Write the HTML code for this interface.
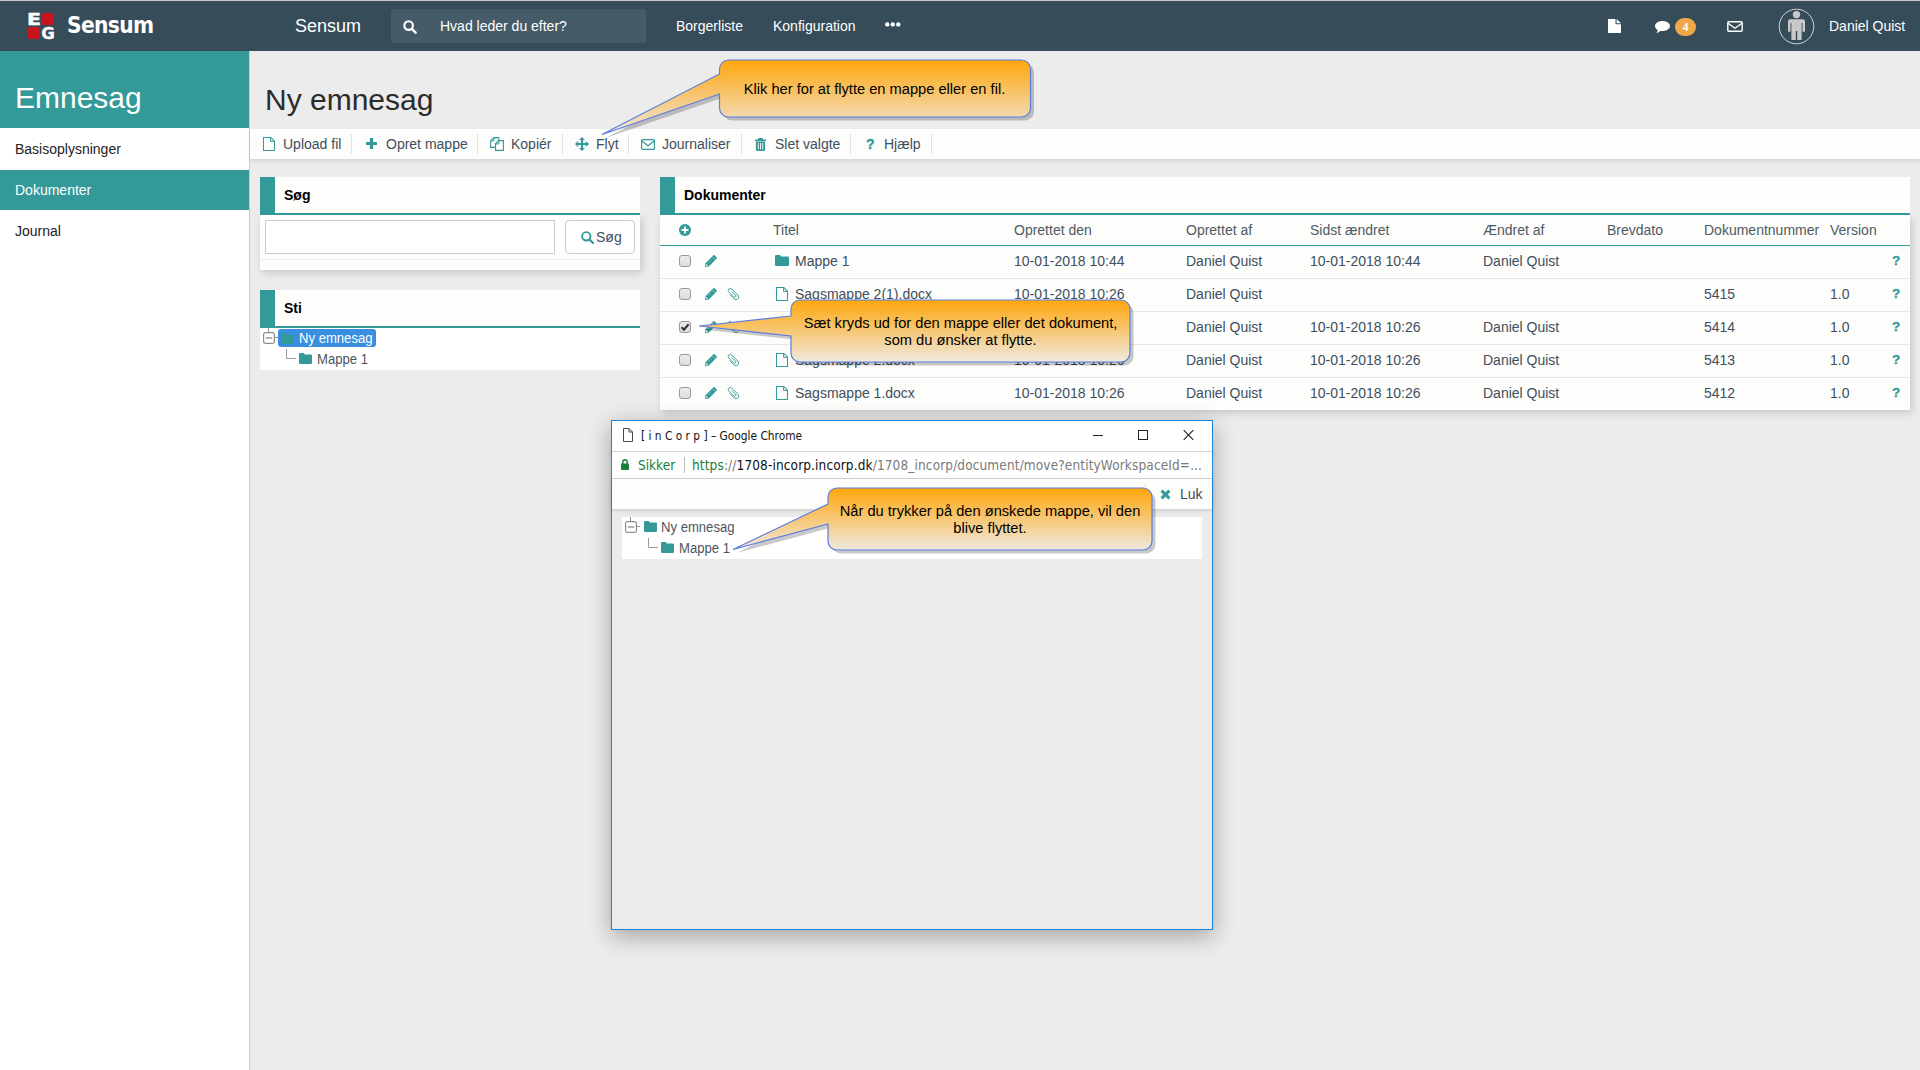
<!DOCTYPE html>
<html lang="da">
<head>
<meta charset="utf-8">
<title>Ny emnesag</title>
<style>
*{box-sizing:border-box;margin:0;padding:0}
html,body{width:1920px;height:1070px;overflow:hidden}
body{background:#ececec;font-family:"Liberation Sans",Arial,sans-serif;font-size:14px;color:#333;position:relative}
.abs{position:absolute}
svg{display:block;overflow:visible}
#topline{left:0;top:0;width:1920px;height:1px;background:#c8c8c8}
#hdr{left:0;top:1px;width:1920px;height:50px;background:#364c58;color:#fff}
#hdr .t{position:absolute;white-space:nowrap;color:#fff}
#srch{left:391px;top:8px;width:255px;height:34px;background:#455c68;border-radius:3px}
#side{left:0;top:51px;width:249px;height:1019px;background:#fff}
#sideline{left:249px;top:51px;width:1px;height:1019px;background:#c9c9c9}
#sideline2{left:249px;top:51px;width:1px;height:77px;background:#d6d0d0}
#topglow{left:250px;top:51px;width:1670px;height:1px;background:#f6f6f6}
#hdrline{left:0;top:50px;width:1920px;height:1px;background:#30444f}
#sidehead{left:0;top:0;width:249px;height:77px;background:#339999}
#sidehead span{position:absolute;left:15px;top:29px;font-size:30px;line-height:36px;color:#fff}
.nav{position:absolute;left:0;width:249px;height:42px;line-height:42px;padding-left:15px;font-size:14px;color:#222}
.nav.on{background:#339999;color:#fff}
#h1{left:265px;top:81px;font-size:30px;line-height:38px;color:#2b2b2b;white-space:nowrap}
#tb{left:250px;top:129px;width:1670px;height:30px;background:#fdfdfb;box-shadow:0 2px 4px rgba(0,0,0,.10)}
.tx{position:absolute;white-space:nowrap;font-size:14px;line-height:20px;color:#3f4f5e}
.sep{position:absolute;width:1px;background:#e3e3e3}
.panel{position:absolute;background:#fdfdfb}
.ph{position:absolute;left:0;top:0;right:0;height:38px;border-bottom:2px solid #339999;background:#fdfdfb}
.ph:before{content:"";position:absolute;left:0;top:0;width:15px;height:38px;background:#339999}
.ph b{position:absolute;left:24px;top:0;line-height:36px;font-size:14px;color:#000;white-space:nowrap}
.pb{position:absolute;left:0;right:0;top:38px;bottom:0;background:#fdfdfb;box-shadow:2px 3px 8px rgba(0,0,0,.16)}
.cb{position:absolute;width:12px;height:12px;border:1px solid #9a9a9a;border-radius:3px;background:linear-gradient(#ececec,#dcdcdc)}
.hl{position:absolute;height:1px;left:0;right:0}
.tree{position:absolute;white-space:nowrap;font-size:14px;line-height:18px;color:#4c5660;transform:scaleX(.935);transform-origin:0 0}
.co{position:absolute;text-align:center;font-size:14.67px;line-height:17px;color:#000;white-space:nowrap}
#win{left:611px;top:420px;width:602px;height:510px;border:1px solid #1a84d8;background:#ebebeb;box-shadow:0 6px 22px rgba(0,0,0,.32)}
.seg{font-family:"DejaVu Sans Condensed","Liberation Sans",sans-serif}
</style>
</head>
<body>
<div id="topline" class="abs"></div>
<div id="hdr" class="abs">
  <svg class="abs" style="left:28px;top:12px" width="26" height="26" viewBox="0 0 26 26">
    <rect x="14" y="0" width="12" height="12" rx="1.2" fill="#c4161c"/>
    <rect x="0" y="14" width="12" height="12" rx="1.2" fill="#c4161c"/>
    <text x="-1" y="12" textLength="14" lengthAdjust="spacingAndGlyphs" font-family="DejaVu Sans, Liberation Sans, sans-serif" font-weight="bold" font-size="16.6" fill="#fff" stroke="#fff" stroke-width="0.5">E</text>
    <text x="13.2" y="26" textLength="13.6" lengthAdjust="spacingAndGlyphs" font-family="DejaVu Sans, Liberation Sans, sans-serif" font-weight="bold" font-size="16.6" fill="#fff" stroke="#fff" stroke-width="0.3">G</text>
  </svg>
  <div class="t" id="brand" style="left:67px;top:8px;font-family:'DejaVu Sans Condensed','Liberation Sans',sans-serif;font-weight:bold;font-size:22.5px;line-height:32px;letter-spacing:-.62px">Sensum</div>
  <div class="t" style="left:295px;top:12px;font-size:18px;line-height:26px">Sensum</div>
  <div id="srch" class="abs"></div>
  <svg class="abs" style="left:403px;top:19px" width="14" height="14" viewBox="0 0 14 14"><circle cx="5.6" cy="5.6" r="4.3" fill="none" stroke="#fff" stroke-width="2.1"/><path d="M8.8 8.8L12.6 12.6" stroke="#fff" stroke-width="2.5" stroke-linecap="round"/></svg>
  <div class="t" style="left:440px;top:15px;font-size:14px;line-height:20px">Hvad leder du efter?</div>
  <div class="t" style="left:676px;top:15px;font-size:14px;line-height:20px">Borgerliste</div>
  <div class="t" style="left:773px;top:15px;font-size:14px;line-height:20px">Konfiguration</div>
  <svg class="abs" style="left:885px;top:21px" width="16" height="5" viewBox="0 0 16 5"><circle cx="2.3" cy="2.4" r="2.2" fill="#fff"/><circle cx="7.8" cy="2.4" r="2.2" fill="#fff"/><circle cx="13.3" cy="2.4" r="2.2" fill="#fff"/></svg>
  <svg class="abs" style="left:1608px;top:18px" width="13" height="14" viewBox="0 0 13 14"><path d="M0 0H7.5V5.2H13V14H0Z M8.6 0L13 4.2H8.6Z" fill="#fff"/></svg>
  <svg class="abs" style="left:1655px;top:20px" width="15" height="13" viewBox="0 0 15 13"><path d="M7.5 0C11.6 0 15 2.2 15 5S11.6 10 7.5 10C6.8 10 6.1 9.9 5.5 9.8C4.6 11 3 12 1.2 12.2C2.2 11.3 2.6 10.2 2.7 9C1 8.1 0 6.6 0 5C0 2.2 3.4 0 7.5 0Z" fill="#fff"/></svg>
  <div class="abs" style="left:1675px;top:17px;width:21px;height:18px;border-radius:9px;background:#f0a747;color:#fff;text-align:center;font-family:'Liberation Serif',serif;font-weight:bold;font-size:12px;line-height:18px">4</div>
  <svg class="abs" style="left:1727px;top:20px" width="16" height="11" viewBox="0 0 16 11"><rect x="0.8" y="0.8" width="14.4" height="9.4" rx="1" fill="none" stroke="#fff" stroke-width="1.4"/><path d="M1 2.2L8 7.2L15 2.2" fill="none" stroke="#fff" stroke-width="1.4"/></svg>
  <svg class="abs" style="left:1778px;top:7px" width="37" height="37" viewBox="0 0 37 37"><circle cx="18.5" cy="18.5" r="17.3" fill="none" stroke="#cfd5d8" stroke-width="1"/><circle cx="18.5" cy="6.6" r="3.7" fill="#c9c9c9"/><path d="M12.2 11.3H24.8Q27 11.3 27 13.5V22.5Q27 24 25.7 24Q24.5 24 24.5 22.5V15H23.6V32H19.2V23H17.8V32H13.4V15H12.5V22.5Q12.5 24 11.3 24Q10 24 10 22.5V13.5Q10 11.3 12.2 11.3Z" fill="#c9c9c9"/></svg>
  <div class="t" style="left:1829px;top:15px;font-size:14px;line-height:20px">Daniel Quist</div>
</div>
<div id="side" class="abs">
  <div id="sidehead" class="abs"><span>Emnesag</span></div>
  <div class="nav" style="top:77px">Basisoplysninger</div>
  <div class="nav on" style="top:119px;height:40px;line-height:40px">Dokumenter</div>
  <div class="nav" style="top:159px">Journal</div>
</div>
<div id="sideline" class="abs"></div>
<div id="h1" class="abs">Ny emnesag</div>

<div id="tb" class="abs"></div>
<svg class="abs" style="left:263px;top:137px" width="12" height="14" viewBox="0 0 12 14"><path d="M0.5 0.5H7.8L11.5 4.2V13.5H0.5Z" fill="none" stroke="#339999" stroke-width="1.05"/><path d="M7.6 0.7V4.4H11.3" fill="none" stroke="#339999" stroke-width="1"/></svg>
<div class="tx" style="left:283px;top:134px">Upload fil</div>
<svg class="abs" style="left:366px;top:138px" width="11" height="11" viewBox="0 0 11 11"><path d="M3.9 0H7.1V3.9H11V7.1H7.1V11H3.9V7.1H0V3.9H3.9Z" fill="#339999"/></svg>
<div class="tx" style="left:386px;top:134px">Opret mappe</div>
<svg class="abs" style="left:490px;top:137px" width="14" height="14" viewBox="0 0 14 14"><path d="M5.5 6.7L8.6 3.6H13.4V13.4H5.5Z" fill="none" stroke="#339999" stroke-width="1.1"/><path d="M5.6 6.9H8.8V3.7" fill="none" stroke="#339999" stroke-width="1"/><path d="M5.4 10.4H0.6V3.7L3.7 0.6H8.9V3.4" fill="none" stroke="#339999" stroke-width="1.1"/><path d="M0.7 3.9H3.9V0.7" fill="none" stroke="#339999" stroke-width="1"/></svg>
<div class="tx" style="left:511px;top:134px">Kopiér</div>
<svg class="abs" style="left:575px;top:137px" width="14" height="14" viewBox="0 0 14 14"><path d="M7 0L10 3.1H8.1V5.9H10.9V4L14 7L10.9 10V8.1H8.1V10.9H10L7 14L4 10.9H5.9V8.1H3.1V10L0 7L3.1 4V5.9H5.9V3.1H4Z" fill="#339999"/></svg>
<div class="tx" style="left:596px;top:134px">Flyt</div>
<svg class="abs" style="left:641px;top:139px" width="14" height="11" viewBox="0 0 14 11"><rect x="0.6" y="0.6" width="12.8" height="9.8" rx="1" fill="none" stroke="#339999" stroke-width="1.2"/><path d="M0.8 2L7 6.8L13.2 2" fill="none" stroke="#339999" stroke-width="1.2"/></svg>
<div class="tx" style="left:662px;top:134px">Journaliser</div>
<svg class="abs" style="left:755px;top:138px" width="11" height="13" viewBox="0 0 11 13"><path d="M3.6 0H7.4L8.2 1.6H11V3H0V1.6H2.8Z M0.9 3.6H10.1V11.6Q10.1 13 8.8 13H2.2Q0.9 13 0.9 11.6Z" fill="#339999"/><path d="M3.3 5V11.4M5.5 5V11.4M7.7 5V11.4" stroke="#fdfdfb" stroke-width="0.9"/></svg>
<div class="tx" style="left:775px;top:134px">Slet valgte</div>
<div class="tx" style="left:866px;top:134px;font-weight:bold;color:#339999;font-size:14px;-webkit-text-stroke:.35px #339999">?</div>
<div class="tx" style="left:884px;top:134px">Hjælp</div>
<div class="sep" style="left:351px;top:134px;height:20px"></div>
<div class="sep" style="left:477px;top:134px;height:20px"></div>
<div class="sep" style="left:562px;top:134px;height:20px"></div>
<div class="sep" style="left:628px;top:134px;height:20px"></div>
<div class="sep" style="left:741px;top:134px;height:20px"></div>
<div class="sep" style="left:850px;top:134px;height:20px"></div>
<div class="sep" style="left:931px;top:134px;height:20px"></div>
<div class="panel" style="left:260px;top:177px;width:380px;height:93px"><div class="pb"></div><div class="ph"><b>Søg</b></div>
<div class="abs" style="left:5px;top:43px;width:290px;height:34px;border:1px solid #ccc;background:#fff"></div>
<div class="abs" style="left:305px;top:43px;width:70px;height:34px;border:1px solid #ccc;border-radius:4px;background:#fff"></div>
<svg class="abs" style="left:321px;top:54px" width="13" height="13" viewBox="0 0 13 13"><circle cx="5.3" cy="5.3" r="4.2" fill="none" stroke="#339999" stroke-width="1.9"/><path d="M8.4 8.4L12 12" stroke="#339999" stroke-width="2.3" stroke-linecap="round"/></svg>
<div class="tx" style="left:336px;top:50px">Søg</div>
<div class="hl" style="top:82px;background:#ebebeb"></div>
</div>
<div class="panel" style="left:260px;top:290px;width:380px;height:80px;background:#fff"><div class="ph"><b>Sti</b></div></div>
<svg class="abs" style="left:263px;top:328px" width="16" height="17" viewBox="0 0 16 17"><path d="M5.5 0V4.5" stroke="#8e8e8e" stroke-width="1"/><rect x="0.6" y="4.6" width="10.8" height="10.8" rx="1.8" fill="#fff" stroke="#8e8e8e" stroke-width="1.2"/><path d="M2.8 10H9.2" stroke="#8a8a8a" stroke-width="1.3"/><path d="M12 9.5H15" stroke="#8e8e8e"/></svg>
<div class="abs" style="left:278px;top:329px;width:98px;height:18px;background:#3a8ee0;border-radius:3px"></div>
<svg class="abs" style="left:281px;top:332.5px" width="13" height="11" viewBox="0 0 13 11"><path d="M1.2 0H4.4Q5.5 0 5.5 1.1V1.5H11.8Q13 1.5 13 2.7V9.8Q13 11 11.8 11H1.2Q0 11 0 9.8V1.2Q0 0 1.2 0Z" fill="#339999"/></svg>
<div class="tree" style="left:299px;top:329px;color:#fff">Ny emnesag</div>
<svg class="abs" style="left:286px;top:349px" width="12" height="10" viewBox="0 0 12 10"><path d="M0.5 0V9.5H10" fill="none" stroke="#999" stroke-width="1"/></svg>
<svg class="abs" style="left:299px;top:353px" width="13" height="11" viewBox="0 0 13 11"><path d="M1.2 0H4.4Q5.5 0 5.5 1.1V1.5H11.8Q13 1.5 13 2.7V9.8Q13 11 11.8 11H1.2Q0 11 0 9.8V1.2Q0 0 1.2 0Z" fill="#339999"/></svg>
<div class="tree" style="left:317px;top:350px">Mappe 1</div>
<div class="panel" style="left:660px;top:177px;width:1250px;height:233px"><div class="pb"></div><div class="ph"><b>Dokumenter</b></div>
<div class="hl" style="top:68px;background:#339999"></div>
<div class="hl" style="top:101px;background:#e8e8e8"></div>
<div class="hl" style="top:134px;background:#e8e8e8"></div>
<div class="hl" style="top:167px;background:#e8e8e8"></div>
<div class="hl" style="top:200px;background:#e8e8e8"></div>
</div>
<svg class="abs" style="left:679px;top:224px" width="12" height="12" viewBox="0 0 12 12"><circle cx="6" cy="6" r="6" fill="#339999"/><path d="M5.1 2.6H6.9V5.1H9.4V6.9H6.9V9.4H5.1V6.9H2.6V5.1H5.1Z" fill="#fdfdfb"/></svg>
<div class="tx" style="left:773px;top:220px;color:#4f5a64">Titel</div>
<div class="tx" style="left:1014px;top:220px;color:#4f5a64">Oprettet den</div>
<div class="tx" style="left:1186px;top:220px;color:#4f5a64">Oprettet af</div>
<div class="tx" style="left:1310px;top:220px;color:#4f5a64">Sidst ændret</div>
<div class="tx" style="left:1483px;top:220px;color:#4f5a64">Ændret af</div>
<div class="tx" style="left:1607px;top:220px;color:#4f5a64">Brevdato</div>
<div class="tx" style="left:1704px;top:220px;color:#4f5a64">Dokumentnummer</div>
<div class="tx" style="left:1830px;top:220px;color:#4f5a64">Version</div>
<div class="cb" style="left:679px;top:255px"></div>
<svg class="abs" style="left:705px;top:255px" width="12" height="12" viewBox="0 0 12 12"><path d="M0 12L0.5 8.2L8.4 0.3Q9 -0.3 9.6 0.3L11.7 2.4Q12.3 3 11.7 3.6L3.8 11.5Z" fill="#339999"/><path d="M1.3 9.1L2.9 10.7L1.7 11.1L0.9 10.3Z" fill="#fdfdfb"/><path d="M7.4 1.9L10.1 4.6" stroke="#dff0ee" stroke-width="0.6"/><path d="M3.3 7.9L6.8 4.4" stroke="#bfe0df" stroke-width="0.6" stroke-dasharray="0.8 0.7"/></svg>
<svg class="abs" style="left:775px;top:255px" width="14" height="11" viewBox="0 0 14 11"><path d="M1.2 0H4.6Q5.8 0 5.8 1.2V1.6H12.8Q14 1.6 14 2.8V9.8Q14 11 12.8 11H1.2Q0 11 0 9.8V1.2Q0 0 1.2 0Z" fill="#339999"/></svg>
<div class="tx" style="left:795px;top:251px">Mappe 1</div>
<div class="tx" style="left:1014px;top:251px">10-01-2018 10:44</div>
<div class="tx" style="left:1186px;top:251px">Daniel Quist</div>
<div class="tx" style="left:1310px;top:251px">10-01-2018 10:44</div>
<div class="tx" style="left:1483px;top:251px">Daniel Quist</div>
<div class="tx" style="left:1892px;top:251px;font-weight:bold;color:#339999;font-size:13.5px;-webkit-text-stroke:.3px #339999">?</div>
<div class="cb" style="left:679px;top:288px"></div>
<svg class="abs" style="left:705px;top:288px" width="12" height="12" viewBox="0 0 12 12"><path d="M0 12L0.5 8.2L8.4 0.3Q9 -0.3 9.6 0.3L11.7 2.4Q12.3 3 11.7 3.6L3.8 11.5Z" fill="#339999"/><path d="M1.3 9.1L2.9 10.7L1.7 11.1L0.9 10.3Z" fill="#fdfdfb"/><path d="M7.4 1.9L10.1 4.6" stroke="#dff0ee" stroke-width="0.6"/><path d="M3.3 7.9L6.8 4.4" stroke="#bfe0df" stroke-width="0.6" stroke-dasharray="0.8 0.7"/></svg>
<svg class="abs" style="left:727px;top:288px" width="12" height="13" viewBox="0 0 12 13"><g transform="translate(5.8 6.2) rotate(-45) scale(.95) translate(-3 -7.6)"><path d="M4.3 5.2V10.4A1.3 1.3 0 0 1 1.7 10.4V3A2.2 2.2 0 0 1 6.1 3V12.1A2.8 2.8 0 0 1 0.5 12.1V6" fill="none" stroke="#339999" stroke-width="0.9" stroke-linecap="round"/></g></svg>
<svg class="abs" style="left:776px;top:287px" width="12" height="14" viewBox="0 0 12 14"><path d="M0.5 0.5H7.8L11.5 4.2V13.5H0.5Z" fill="none" stroke="#339999" stroke-width="1.05"/><path d="M7.6 0.7V4.4H11.3" fill="none" stroke="#339999" stroke-width="1"/></svg>
<div class="tx" style="left:795px;top:284px">Sagsmappe 2(1).docx</div>
<div class="tx" style="left:1014px;top:284px">10-01-2018 10:26</div>
<div class="tx" style="left:1186px;top:284px">Daniel Quist</div>
<div class="tx" style="left:1704px;top:284px">5415</div>
<div class="tx" style="left:1830px;top:284px">1.0</div>
<div class="tx" style="left:1892px;top:284px;font-weight:bold;color:#339999;font-size:13.5px;-webkit-text-stroke:.3px #339999">?</div>
<div class="cb" style="left:679px;top:321px"></div><svg class="abs" style="left:680px;top:322px" width="10" height="10" viewBox="0 0 10 10"><path d="M1.6 5.2L4 7.6L8.6 2.2" fill="none" stroke="#333" stroke-width="2.1"/></svg>
<svg class="abs" style="left:705px;top:321px" width="12" height="12" viewBox="0 0 12 12"><path d="M0 12L0.5 8.2L8.4 0.3Q9 -0.3 9.6 0.3L11.7 2.4Q12.3 3 11.7 3.6L3.8 11.5Z" fill="#339999"/><path d="M1.3 9.1L2.9 10.7L1.7 11.1L0.9 10.3Z" fill="#fdfdfb"/><path d="M7.4 1.9L10.1 4.6" stroke="#dff0ee" stroke-width="0.6"/><path d="M3.3 7.9L6.8 4.4" stroke="#bfe0df" stroke-width="0.6" stroke-dasharray="0.8 0.7"/></svg>
<svg class="abs" style="left:727px;top:321px" width="12" height="13" viewBox="0 0 12 13"><g transform="translate(5.8 6.2) rotate(-45) scale(.95) translate(-3 -7.6)"><path d="M4.3 5.2V10.4A1.3 1.3 0 0 1 1.7 10.4V3A2.2 2.2 0 0 1 6.1 3V12.1A2.8 2.8 0 0 1 0.5 12.1V6" fill="none" stroke="#339999" stroke-width="0.9" stroke-linecap="round"/></g></svg>
<svg class="abs" style="left:776px;top:320px" width="12" height="14" viewBox="0 0 12 14"><path d="M0.5 0.5H7.8L11.5 4.2V13.5H0.5Z" fill="none" stroke="#339999" stroke-width="1.05"/><path d="M7.6 0.7V4.4H11.3" fill="none" stroke="#339999" stroke-width="1"/></svg>
<div class="tx" style="left:795px;top:317px">Sagsmappe 3.docx</div>
<div class="tx" style="left:1014px;top:317px">10-01-2018 10:26</div>
<div class="tx" style="left:1186px;top:317px">Daniel Quist</div>
<div class="tx" style="left:1310px;top:317px">10-01-2018 10:26</div>
<div class="tx" style="left:1483px;top:317px">Daniel Quist</div>
<div class="tx" style="left:1704px;top:317px">5414</div>
<div class="tx" style="left:1830px;top:317px">1.0</div>
<div class="tx" style="left:1892px;top:317px;font-weight:bold;color:#339999;font-size:13.5px;-webkit-text-stroke:.3px #339999">?</div>
<div class="cb" style="left:679px;top:354px"></div>
<svg class="abs" style="left:705px;top:354px" width="12" height="12" viewBox="0 0 12 12"><path d="M0 12L0.5 8.2L8.4 0.3Q9 -0.3 9.6 0.3L11.7 2.4Q12.3 3 11.7 3.6L3.8 11.5Z" fill="#339999"/><path d="M1.3 9.1L2.9 10.7L1.7 11.1L0.9 10.3Z" fill="#fdfdfb"/><path d="M7.4 1.9L10.1 4.6" stroke="#dff0ee" stroke-width="0.6"/><path d="M3.3 7.9L6.8 4.4" stroke="#bfe0df" stroke-width="0.6" stroke-dasharray="0.8 0.7"/></svg>
<svg class="abs" style="left:727px;top:354px" width="12" height="13" viewBox="0 0 12 13"><g transform="translate(5.8 6.2) rotate(-45) scale(.95) translate(-3 -7.6)"><path d="M4.3 5.2V10.4A1.3 1.3 0 0 1 1.7 10.4V3A2.2 2.2 0 0 1 6.1 3V12.1A2.8 2.8 0 0 1 0.5 12.1V6" fill="none" stroke="#339999" stroke-width="0.9" stroke-linecap="round"/></g></svg>
<svg class="abs" style="left:776px;top:353px" width="12" height="14" viewBox="0 0 12 14"><path d="M0.5 0.5H7.8L11.5 4.2V13.5H0.5Z" fill="none" stroke="#339999" stroke-width="1.05"/><path d="M7.6 0.7V4.4H11.3" fill="none" stroke="#339999" stroke-width="1"/></svg>
<div class="tx" style="left:795px;top:350px">Sagsmappe 2.docx</div>
<div class="tx" style="left:1014px;top:350px">10-01-2018 10:26</div>
<div class="tx" style="left:1186px;top:350px">Daniel Quist</div>
<div class="tx" style="left:1310px;top:350px">10-01-2018 10:26</div>
<div class="tx" style="left:1483px;top:350px">Daniel Quist</div>
<div class="tx" style="left:1704px;top:350px">5413</div>
<div class="tx" style="left:1830px;top:350px">1.0</div>
<div class="tx" style="left:1892px;top:350px;font-weight:bold;color:#339999;font-size:13.5px;-webkit-text-stroke:.3px #339999">?</div>
<div class="cb" style="left:679px;top:387px"></div>
<svg class="abs" style="left:705px;top:387px" width="12" height="12" viewBox="0 0 12 12"><path d="M0 12L0.5 8.2L8.4 0.3Q9 -0.3 9.6 0.3L11.7 2.4Q12.3 3 11.7 3.6L3.8 11.5Z" fill="#339999"/><path d="M1.3 9.1L2.9 10.7L1.7 11.1L0.9 10.3Z" fill="#fdfdfb"/><path d="M7.4 1.9L10.1 4.6" stroke="#dff0ee" stroke-width="0.6"/><path d="M3.3 7.9L6.8 4.4" stroke="#bfe0df" stroke-width="0.6" stroke-dasharray="0.8 0.7"/></svg>
<svg class="abs" style="left:727px;top:387px" width="12" height="13" viewBox="0 0 12 13"><g transform="translate(5.8 6.2) rotate(-45) scale(.95) translate(-3 -7.6)"><path d="M4.3 5.2V10.4A1.3 1.3 0 0 1 1.7 10.4V3A2.2 2.2 0 0 1 6.1 3V12.1A2.8 2.8 0 0 1 0.5 12.1V6" fill="none" stroke="#339999" stroke-width="0.9" stroke-linecap="round"/></g></svg>
<svg class="abs" style="left:776px;top:386px" width="12" height="14" viewBox="0 0 12 14"><path d="M0.5 0.5H7.8L11.5 4.2V13.5H0.5Z" fill="none" stroke="#339999" stroke-width="1.05"/><path d="M7.6 0.7V4.4H11.3" fill="none" stroke="#339999" stroke-width="1"/></svg>
<div class="tx" style="left:795px;top:383px">Sagsmappe 1.docx</div>
<div class="tx" style="left:1014px;top:383px">10-01-2018 10:26</div>
<div class="tx" style="left:1186px;top:383px">Daniel Quist</div>
<div class="tx" style="left:1310px;top:383px">10-01-2018 10:26</div>
<div class="tx" style="left:1483px;top:383px">Daniel Quist</div>
<div class="tx" style="left:1704px;top:383px">5412</div>
<div class="tx" style="left:1830px;top:383px">1.0</div>
<div class="tx" style="left:1892px;top:383px;font-weight:bold;color:#339999;font-size:13.5px;-webkit-text-stroke:.3px #339999">?</div>
<svg class="abs" style="left:599.5px;top:58px" width="438.5" height="84.5" viewBox="0 0 438.5 84.5"><defs><linearGradient id="g1" x1="0" y1="0" x2="0" y2="1"><stop offset="0" stop-color="#ffa60c"/><stop offset="1" stop-color="#efe9e0"/></linearGradient></defs><path d="M128.5 2.0H421.5A9 9 0 0 1 430.5 11.0V50.0A9 9 0 0 1 421.5 59.0H128.5A9 9 0 0 1 119.5 50.0V36.0L2.0 76.5L119.5 16.0V11.0A9 9 0 0 1 128.5 2.0Z" transform="translate(3.5,3.5)" fill="#000" fill-opacity="0.21"/><path d="M128.5 2.0H421.5A9 9 0 0 1 430.5 11.0V50.0A9 9 0 0 1 421.5 59.0H128.5A9 9 0 0 1 119.5 50.0V36.0L2.0 76.5L119.5 16.0V11.0A9 9 0 0 1 128.5 2.0Z" fill="url(#g1)" stroke="#5b7ee0" stroke-width="1.2"/></svg>
<div class="co" style="left:719px;top:81px;width:311px">Klik her for at flytte en mappe eller en fil.</div>
<svg class="abs" style="left:697px;top:298px" width="441" height="72" viewBox="0 0 441 72"><defs><linearGradient id="g2" x1="0" y1="0" x2="0" y2="1"><stop offset="0" stop-color="#ffa60c"/><stop offset="1" stop-color="#efe9e0"/></linearGradient></defs><path d="M103.0 2.0H424.0A9 9 0 0 1 433.0 11.0V55.0A9 9 0 0 1 424.0 64.0H103.0A9 9 0 0 1 94.0 55.0V38.0L2.0 28.0L94.0 18.0V11.0A9 9 0 0 1 103.0 2.0Z" transform="translate(3.5,3.5)" fill="#000" fill-opacity="0.21"/><path d="M103.0 2.0H424.0A9 9 0 0 1 433.0 11.0V55.0A9 9 0 0 1 424.0 64.0H103.0A9 9 0 0 1 94.0 55.0V38.0L2.0 28.0L94.0 18.0V11.0A9 9 0 0 1 103.0 2.0Z" fill="url(#g2)" stroke="#5b7ee0" stroke-width="1.2"/></svg>
<div class="co" style="left:791px;top:315px;width:339px">Sæt kryds ud for den mappe eller det dokument,<br>som du ønsker at flytte.</div>
<div id="win" class="abs">
<div class="abs" style="left:0;top:0;width:600px;height:30px;background:#fff"></div>
<div class="abs" style="left:0;top:30px;width:600px;height:1px;background:#d6d6d6"></div>
<div class="abs" style="left:0;top:31px;width:600px;height:27px;background:#fff"></div>
<div class="abs" style="left:0;top:57px;width:600px;height:1px;background:#d0d0d0"></div>
<div class="abs" style="left:0;top:58px;width:600px;height:30px;background:#fdfdfb;box-shadow:0 2px 4px rgba(0,0,0,.12)"></div>
<div class="abs" style="left:10px;top:96px;width:580px;height:42px;background:#fff"></div>
</div>
<svg class="abs" style="left:622px;top:428px" width="11" height="14" viewBox="0 0 11 14"><path d="M1.5 0.5H7L10.5 4V13.5H1.5Z" fill="#fff" stroke="#4a4a4a" stroke-width="1"/><path d="M7 0.5V4H10.5" fill="none" stroke="#4a4a4a" stroke-width="1"/></svg>
<div class="tx seg" style="left:641px;top:427px;font-size:11.8px;line-height:18px;color:#111">[ i n C o r p ] – Google Chrome</div>
<svg class="abs" style="left:1093px;top:435px" width="10" height="1" viewBox="0 0 10 1"><rect width="10" height="1" fill="#222"/></svg>
<svg class="abs" style="left:1138px;top:430px" width="10" height="10" viewBox="0 0 10 10"><rect x="0.5" y="0.5" width="9" height="9" fill="none" stroke="#222"/></svg>
<svg class="abs" style="left:1183px;top:430px" width="11" height="10" viewBox="0 0 11 10"><path d="M0.7 0.2L10.3 9.8M10.3 0.2L0.7 9.8" stroke="#222" stroke-width="1.1"/></svg>
<svg class="abs" style="left:621px;top:459px" width="8" height="11" viewBox="0 0 8 11"><rect x="0" y="4.4" width="8" height="6.6" rx="0.8" fill="#188038"/><path d="M1.8 5V3Q1.8 0.8 4 0.8Q6.2 0.8 6.2 3V5" fill="none" stroke="#188038" stroke-width="1.4"/></svg>
<div class="tx seg" style="left:638px;top:455px;font-size:13.5px;line-height:20px;color:#188038">Sikker</div>
<div class="sep" style="left:684px;top:457px;height:16px;background:#bdbdbd"></div>
<div class="tx seg" style="left:692px;top:455px;font-size:13.5px;letter-spacing:.125px;line-height:20px;color:#7a7a7a"><span style="color:#188038">https</span>://<span style="color:#111">1708-incorp.incorp.dk</span>/1708_incorp/document/move?entityWorkspaceId=...</div>
<div class="sep" style="left:1145px;top:484px;height:20px"></div>
<svg class="abs" style="left:1160px;top:489px" width="11" height="11" viewBox="0 0 11 11"><path d="M1.6 1.6L9.4 9.4M9.4 1.6L1.6 9.4" stroke="#339999" stroke-width="3" stroke-linecap="butt"/></svg>
<div class="tx" style="left:1180px;top:484px">Luk</div>
<svg class="abs" style="left:625px;top:517px" width="16" height="17" viewBox="0 0 16 17"><path d="M5.5 0V4.5" stroke="#8e8e8e" stroke-width="1"/><rect x="0.6" y="4.6" width="10.8" height="10.8" rx="1.8" fill="#fff" stroke="#8e8e8e" stroke-width="1.2"/><path d="M2.8 10H9.2" stroke="#8a8a8a" stroke-width="1.3"/><path d="M12 9.5H15" stroke="#8e8e8e"/></svg>
<svg class="abs" style="left:644px;top:521px" width="13" height="11" viewBox="0 0 13 11"><path d="M1.2 0H4.4Q5.5 0 5.5 1.1V1.5H11.8Q13 1.5 13 2.7V9.8Q13 11 11.8 11H1.2Q0 11 0 9.8V1.2Q0 0 1.2 0Z" fill="#339999"/></svg>
<div class="tree" style="left:661px;top:518px">Ny emnesag</div>
<svg class="abs" style="left:648px;top:538px" width="12" height="10" viewBox="0 0 12 10"><path d="M0.5 0V9.5H10" fill="none" stroke="#999" stroke-width="1"/></svg>
<svg class="abs" style="left:661px;top:542px" width="13" height="11" viewBox="0 0 13 11"><path d="M1.2 0H4.4Q5.5 0 5.5 1.1V1.5H11.8Q13 1.5 13 2.7V9.8Q13 11 11.8 11H1.2Q0 11 0 9.8V1.2Q0 0 1.2 0Z" fill="#339999"/></svg>
<div class="tree" style="left:679px;top:539px">Mappe 1</div>
<svg class="abs" style="left:731px;top:486px" width="429" height="72" viewBox="0 0 429 72"><defs><linearGradient id="g3" x1="0" y1="0" x2="0" y2="1"><stop offset="0" stop-color="#ffa60c"/><stop offset="1" stop-color="#efe9e0"/></linearGradient></defs><path d="M106.0 2.0H412.0A9 9 0 0 1 421.0 11.0V55.0A9 9 0 0 1 412.0 64.0H106.0A9 9 0 0 1 97.0 55.0V38.0L2.0 63.5L97.0 18.0V11.0A9 9 0 0 1 106.0 2.0Z" transform="translate(3.5,3.5)" fill="#000" fill-opacity="0.21"/><path d="M106.0 2.0H412.0A9 9 0 0 1 421.0 11.0V55.0A9 9 0 0 1 412.0 64.0H106.0A9 9 0 0 1 97.0 55.0V38.0L2.0 63.5L97.0 18.0V11.0A9 9 0 0 1 106.0 2.0Z" fill="url(#g3)" stroke="#5b7ee0" stroke-width="1.2"/></svg>
<div class="co" style="left:828px;top:503px;width:324px">Når du trykker på den ønskede mappe, vil den<br>blive flyttet.</div>
</body>
</html>
